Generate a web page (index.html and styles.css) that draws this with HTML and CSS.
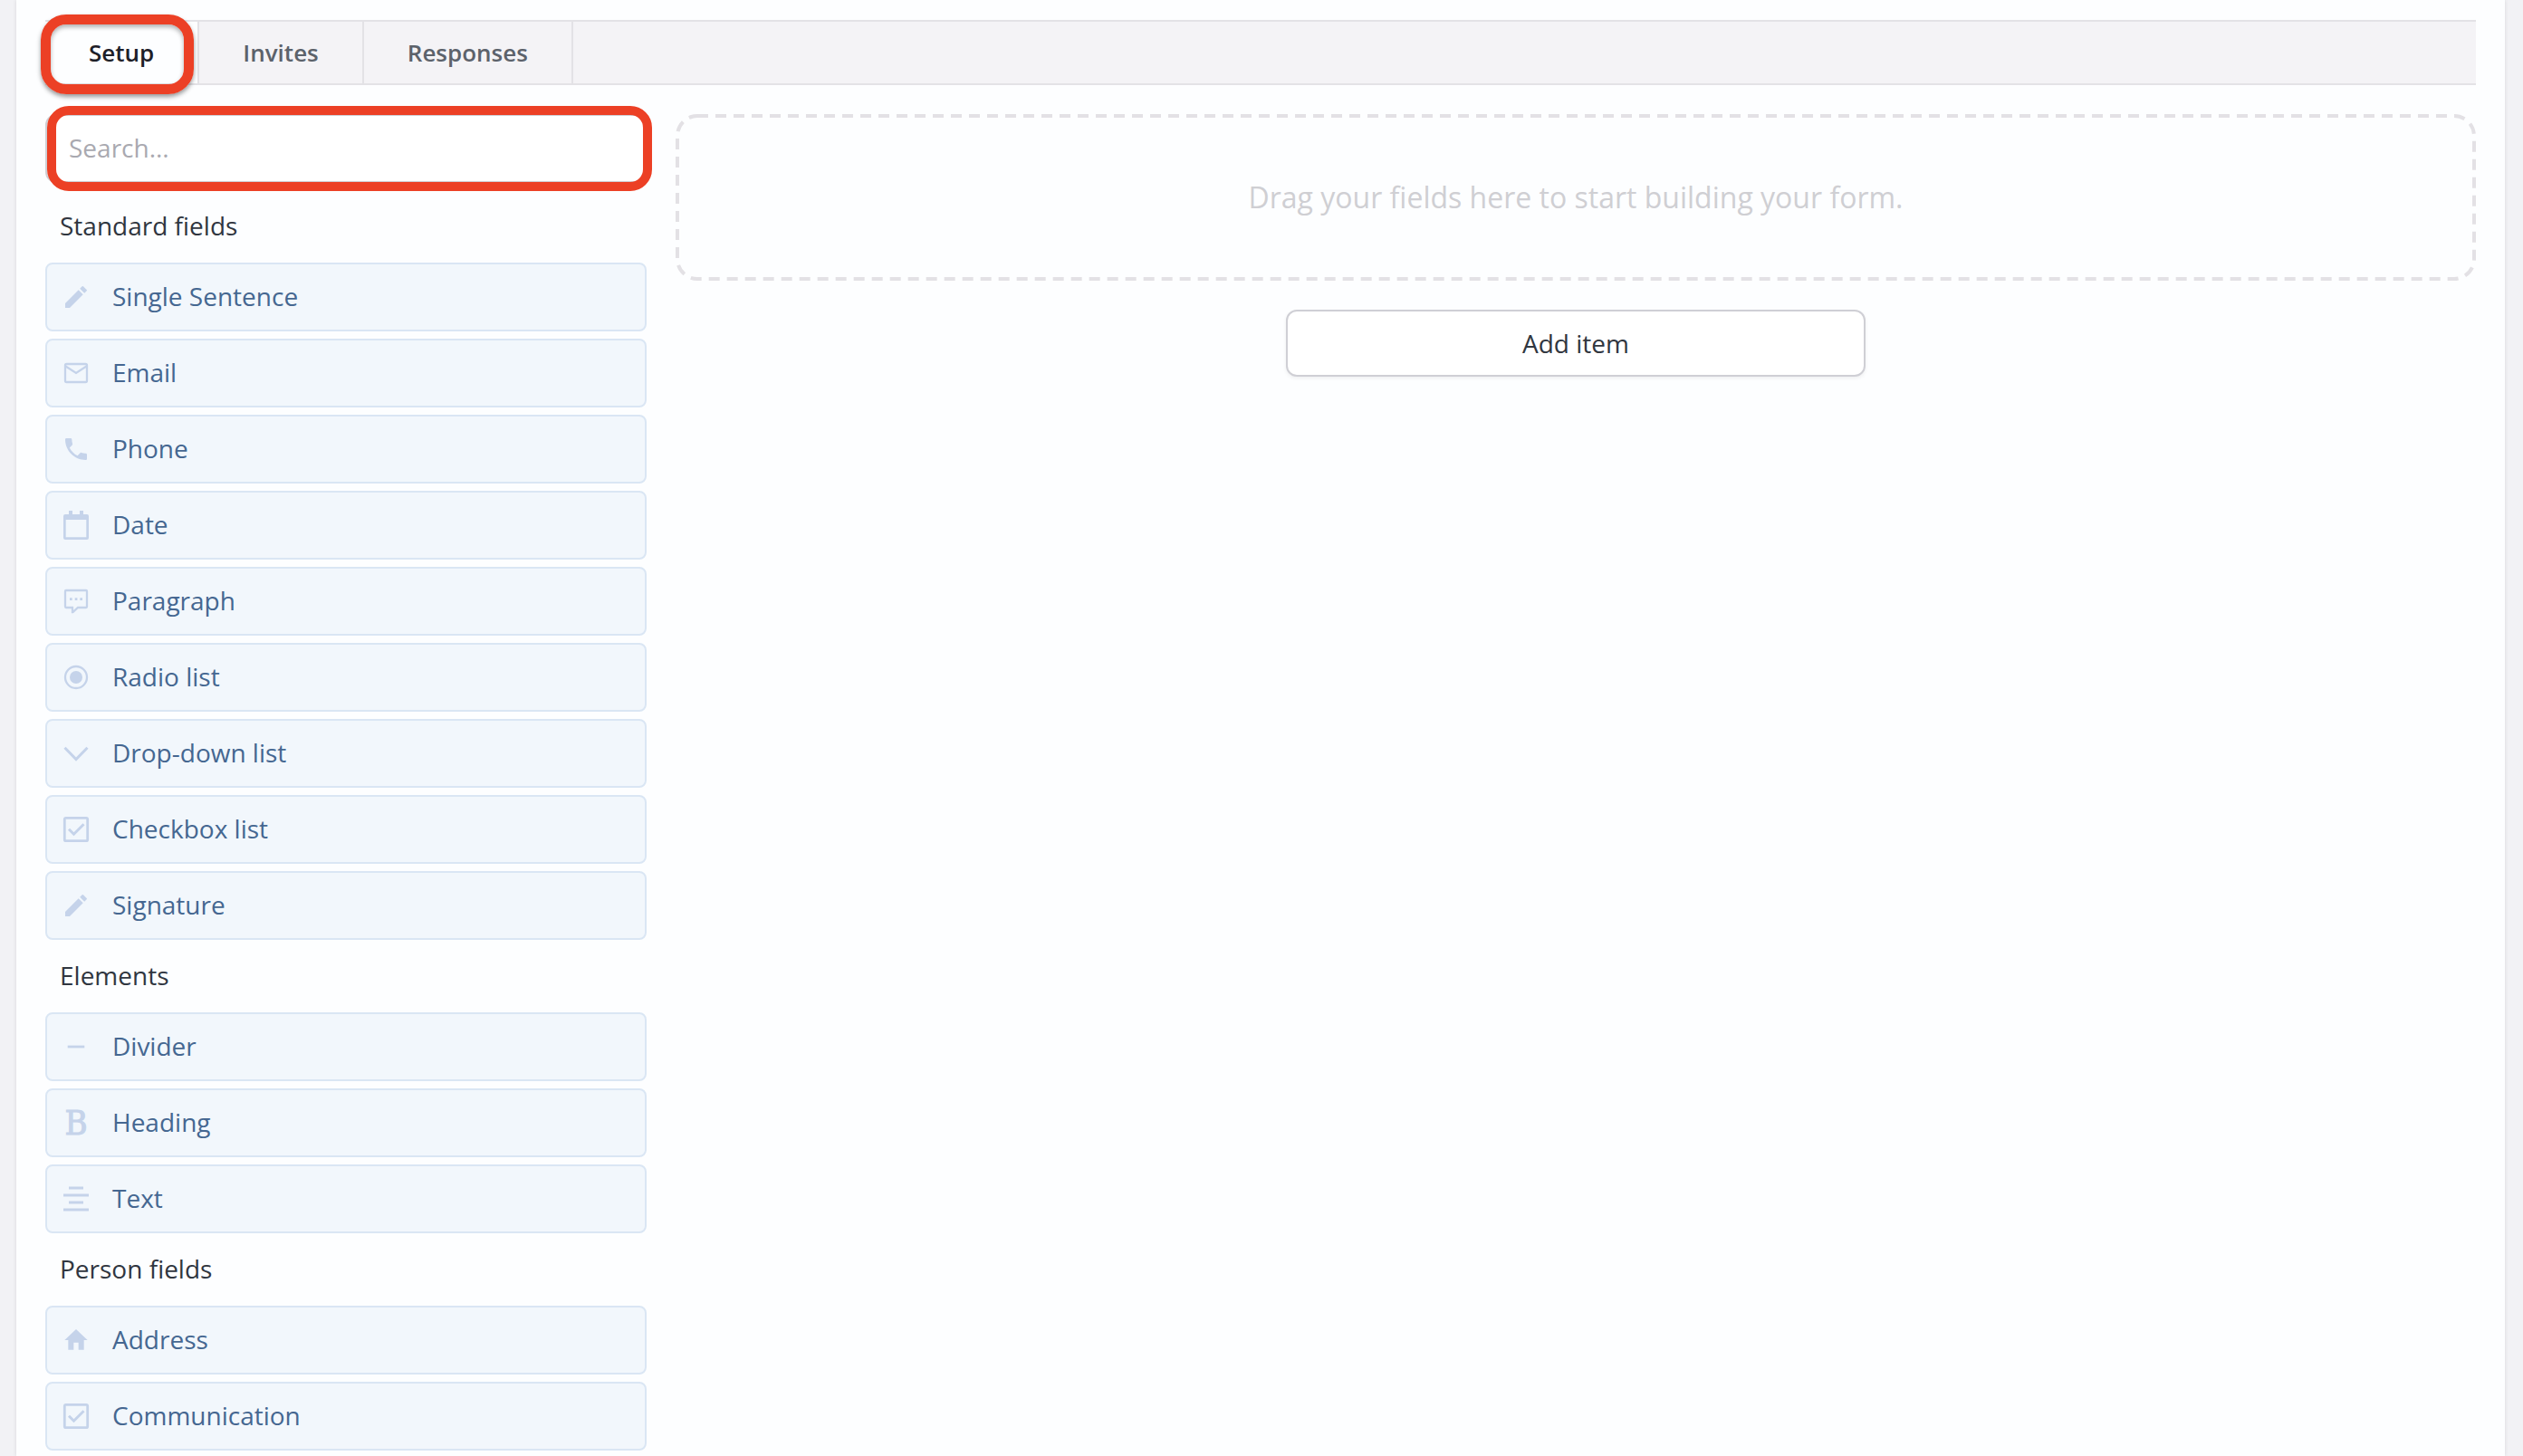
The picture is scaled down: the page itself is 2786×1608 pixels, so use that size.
FILE: index.html
```html
<!DOCTYPE html>
<html lang="en">
  <head>
    <meta charset="UTF-8" />
    <meta name="viewport" content="width=device-width, initial-scale=1.0" />
    <title>Form setup</title>
    <link rel="stylesheet" href="styles.css">
  </head>
  <body>
    <!-- shared icons -->
    <svg class="sprite" aria-hidden="true">
      <symbol id="i-pencil" viewBox="0 0 32 32">
        <path fill="currentColor" d="M4 23v5h5l14.7-14.7-5-5zM20.200 6.800l5 5 2.500-2.500a.8.8 0 0 0 0-1.200l-3.800-3.800a.8.8 0 0 0-1.200 0z" />
      </symbol>
      <symbol id="i-check" viewBox="0 0 32 32">
        <rect x="3.300" y="3.300" width="25.400" height="25.400" rx="1.500" fill="none" stroke="currentColor" stroke-width="2.800" />
        <path d="M8 15.700l5.500 5.500 11-11" fill="none" stroke="currentColor" stroke-width="3" />
      </symbol>
    </svg>

    <div class="panel">
      <nav class="tabs">
        <a href="#setup" class="tab active">Setup<span class="mark mark-tab"></span></a>
        <a href="#invites" class="tab">Invites</a>
        <a href="#responses" class="tab">Responses</a>
      </nav>

      <div class="builder">
        <aside class="sidebar">
          <div class="search">
            <input type="text" class="search-input" placeholder="Search..." aria-label="Search fields" />
            <span class="mark mark-search"></span>
          </div>

          <h2 class="group-title">Standard fields</h2>
          <ul class="fields">
            <li>
              <button type="button" class="field"><svg class="icon"><use href="#i-pencil" /></svg>Single Sentence</button>
            </li>
            <li>
              <button type="button" class="field">
                <svg class="icon" viewBox="0 0 32 32" fill="none" stroke="currentColor" stroke-width="2.300">
                  <rect x="4" y="6" width="24" height="20" rx="1.500" />
                  <path d="M4.500 8.500L16 16l11.500-7.500" />
                </svg>Email
              </button>
            </li>
            <li>
              <button type="button" class="field">
                <svg class="icon" viewBox="0 0 24 24" fill="currentColor">
                  <path d="M6.620 10.790c1.440 2.830 3.760 5.140 6.590 6.590l2.200-2.200c.27-.27.67-.36 1.020-.24 1.120.37 2.330.57 3.570.57.55 0 1 .45 1 1V20c0 .55-.45 1-1 1-9.390 0-17-7.610-17-17 0-.55.45-1 1-1h3.500c.55 0 1 .45 1 1 0 1.250.2 2.450.57 3.570.11.35.03.74-.25 1.020z" />
                </svg>Phone
              </button>
            </li>
            <li>
              <button type="button" class="field">
                <svg class="icon" viewBox="0 0 32 32" fill="currentColor">
                  <path fill-rule="evenodd" d="M8 0h4v4h8V0h4v4h4a2 2 0 0 1 2 2v24a2 2 0 0 1-2 2H4a2 2 0 0 1-2-2V6a2 2 0 0 1 2-2h4zM4.700 10v19.300h22.600V10z" />
                </svg>Date
              </button>
            </li>
            <li>
              <button type="button" class="field">
                <svg class="icon" viewBox="0 0 32 32">
                  <path d="M5 4h22a1 1 0 0 1 1 1v17a1 1 0 0 1-1 1h-9l-5.500 5h-.5v-5H5a1 1 0 0 1-1-1V5a1 1 0 0 1 1-1z" fill="none" stroke="currentColor" stroke-width="2.300" />
                  <path d="M9 12.200h2.700v2.700H9zM14.700 12.200h2.700v2.700h-2.700zM20.300 12.200H23v2.700h-2.700z" fill="currentColor" />
                </svg>Paragraph
              </button>
            </li>
            <li>
              <button type="button" class="field">
                <svg class="icon" viewBox="0 0 32 32">
                  <circle cx="16" cy="16" r="12" fill="none" stroke="currentColor" stroke-width="2.300" />
                  <circle cx="16" cy="16" r="7" fill="currentColor" />
                </svg>Radio list
              </button>
            </li>
            <li>
              <button type="button" class="field">
                <svg class="icon" viewBox="0 0 32 32" fill="none" stroke="currentColor" stroke-width="3">
                  <path d="M3.500 9.800L16 22.500 28.500 9.800" />
                </svg>Drop-down list
              </button>
            </li>
            <li>
              <button type="button" class="field"><svg class="icon"><use href="#i-check" /></svg>Checkbox list</button>
            </li>
            <li>
              <button type="button" class="field"><svg class="icon"><use href="#i-pencil" /></svg>Signature</button>
            </li>
          </ul>

          <h2 class="group-title">Elements</h2>
          <ul class="fields">
            <li>
              <button type="button" class="field">
                <svg class="icon" viewBox="0 0 32 32" fill="none" stroke="currentColor" stroke-width="2.800">
                  <path d="M6.700 16h18.600" />
                </svg>Divider
              </button>
            </li>
            <li>
              <button type="button" class="field"><span class="icon icon-bold" aria-hidden="true">B</span>Heading</button>
            </li>
            <li>
              <button type="button" class="field">
                <svg class="icon" viewBox="0 0 32 32" fill="none" stroke="currentColor" stroke-width="2.800">
                  <path d="M8 4h16M2 12h28M8 20h16M2 28h28" />
                </svg>Text
              </button>
            </li>
          </ul>

          <h2 class="group-title">Person fields</h2>
          <ul class="fields">
            <li>
              <button type="button" class="field">
                <svg class="icon" viewBox="0 0 24 24" fill="currentColor">
                  <path d="M10 20v-6h4v6h4.500v-8h3L12 3l-9.500 9h3v8z" />
                </svg>Address
              </button>
            </li>
            <li>
              <button type="button" class="field"><svg class="icon"><use href="#i-check" /></svg>Communication</button>
            </li>
          </ul>
        </aside>

        <main class="canvas">
          <div class="dropzone">
            <svg class="dashes" aria-hidden="true"><rect x="2" y="2" rx="22" /></svg>
            Drag your fields here to start building your form.
          </div>
          <button type="button" class="add">Add item</button>
        </main>
      </div>
    </div>
  </body>
</html>
```
FILE: styles.css
```css
* {
  box-sizing: border-box;
}
body {
  margin: 0;
  padding: 0 20px 0 18px;
  background: #f2f2f5;
  color: #30363f;
  font: 28px/40px 'Open Sans', 'Noto Sans', sans-serif;
}
ul {
  margin: 0;
  padding: 0;
  list-style: none;
}
button,
input {
  font: inherit;
}
.sprite {
  position: absolute;
  width: 0;
  height: 0;
}
.panel {
  min-height: 100vh;
  padding: 22px 32px 6px;
  background: #fdfeff;
  box-shadow: 0 0 4px rgba(60, 50, 60, 0.14);
}

/* tabs */
.tabs {
  display: flex;
  height: 72px;
  border: solid #e3e2e6;
  border-width: 2px 0;
  background: #f4f3f6;
}
.tab {
  position: relative;
  padding: 0 48px;
  border-right: 2px solid #e3e2e6;
  color: #5c626b;
  font-size: 26px;
  font-weight: 600;
  line-height: 68px;
  text-decoration: none;
}
.tab.active {
  background: #fdfeff;
  color: #1d2028;
}

/* red outlines */
.mark {
  position: absolute;
  z-index: 1;
  border: 11px solid #ec4025;
  border-radius: 28px;
  pointer-events: none;
}
.mark-tab {
  top: -8px;
  right: 4px;
  bottom: -12px;
  left: -5px;
  box-shadow: 0 3px 5px rgba(0, 0, 0, 0.4), inset 0 3px 5px rgba(0, 0, 0, 0.3);
}
.mark-search {
  top: -9px;
  right: -6px;
  bottom: -9px;
  left: 2px;
  border-width: 10px;
  border-radius: 24px;
}

.builder {
  display: grid;
  grid-template-columns: 664px 1fr;
  gap: 32px;
  padding-top: 32px;
}

/* sidebar */
.search {
  position: relative;
  margin-bottom: 8px;
}
.search-input {
  display: block;
  width: 100%;
  height: 76px;
  padding: 0 24px 2px;
  border: 2px solid #cfcfd5;
  border-radius: 12px;
  background: #fff;
  outline: none;
}
.search-input::placeholder {
  color: #a9a9b0;
  opacity: 1;
}
.group-title {
  margin: 0;
  padding: 19px 16px 21px;
  font-size: 28px;
  font-weight: 400;
}
.fields {
  display: grid;
  gap: 8px;
}
.field {
  display: flex;
  align-items: center;
  gap: 24px;
  width: 100%;
  height: 76px;
  padding: 0 16px 2px;
  border: 2px solid #dae6f4;
  border-radius: 8px;
  background: #f2f7fc;
  color: #456791;
  cursor: grab;
}
.icon {
  flex: none;
  width: 32px;
  height: 32px;
  margin-top: 2px;
  color: #c5d3ea;
}
.icon-bold {
  font: 38px/32px 'DejaVu Serif Condensed', 'DejaVu Serif', serif;
  text-align: center;
  -webkit-text-stroke: 1px #c5d3ea;
}

/* form area */
.canvas {
  display: flex;
  flex-direction: column;
  align-items: center;
}
.dropzone {
  position: relative;
  width: 100%;
  padding: 72px 32px;
  color: #cfcfd3;
  font-size: 32px;
  text-align: center;
}
.dashes {
  position: absolute;
  top: 0;
  left: 0;
  width: 100%;
  height: 100%;
}
.dashes rect {
  width: calc(100% - 4px);
  height: calc(100% - 4px);
  fill: none;
  stroke: #e3e1e5;
  stroke-width: 4px;
  stroke-dasharray: 12 8;
}
.add {
  width: 640px;
  max-width: 100%;
  height: 74px;
  margin-top: 32px;
  border: 2px solid #cfcfd5;
  border-radius: 12px;
  background: #fff;
  color: #30363f;
  box-shadow: 0 2px 4px rgba(0, 0, 0, 0.06);
}
```
